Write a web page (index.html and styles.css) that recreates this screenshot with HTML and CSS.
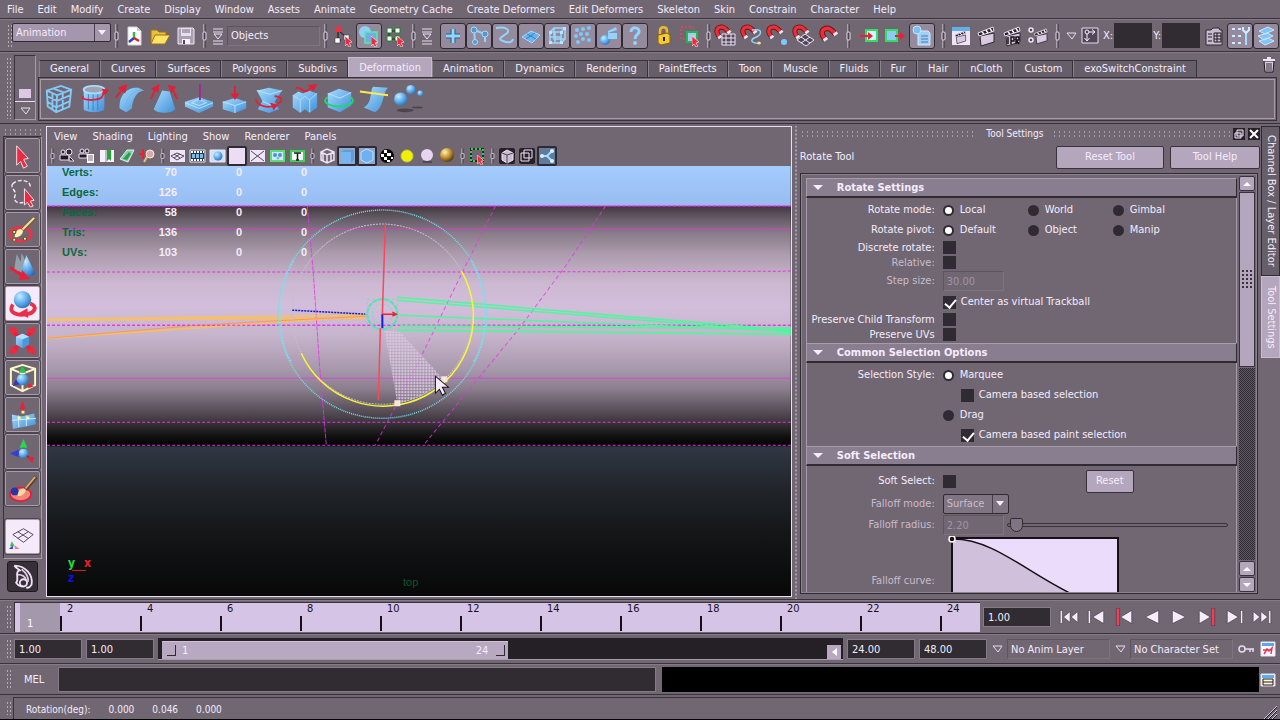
FILE: index.html
```html
<!DOCTYPE html>
<html lang="en">

<head>
    <meta charset="UTF-8">
    <meta name="viewport" content="width=device-width, initial-scale=1.0">
    <title>Animation</title>
    <link rel="stylesheet" href="styles.css">
</head>

<body>
    <!-- Shared icon shapes -->
    <svg class="defs" width="0" height="0">
        <defs>
            <linearGradient id="blue" x1="0" y1="0" x2="1" y2="1">
                <stop offset="0" stop-color="#a8dcff" />
                <stop offset="1" stop-color="#3f8fd8" />
            </linearGradient>
            <radialGradient id="ball" cx=".35" cy=".3" r=".8">
                <stop offset="0" stop-color="#c8ecff" />
                <stop offset=".5" stop-color="#62b0f0" />
                <stop offset="1" stop-color="#2868b0" />
            </radialGradient>
            <radialGradient id="gold" cx=".35" cy=".3" r=".8">
                <stop offset="0" stop-color="#fff4b0" />
                <stop offset=".5" stop-color="#c09030" />
                <stop offset="1" stop-color="#402808" />
            </radialGradient>
            <symbol id="sep" viewBox="0 0 10 26" preserveAspectRatio="none">
                <path d="M5 1v8M5 17v8" stroke="#e8daf0" />
                <path d="M6 1v8M6 17v8" stroke="#38323a" />
                <rect x="4" y="9" width="3" height="8" rx="1" fill="#48404a" stroke="#e8daf0" />
            </symbol>
            <symbol id="stack" viewBox="0 0 18 26">
                <path d="M4 6h10M4 9h10M4 18h10M4 21h10" stroke="#e8daf0" />
                <path d="M5 11h8l-4 5z" fill="none" stroke="#f0e4f8" />
            </symbol>
            <symbol id="down" viewBox="0 0 12 12">
                <path d="M2 3h9l-4 6z" fill="#706773" stroke="#e8daf0" />
            </symbol>
            <symbol id="magnet" viewBox="0 0 24 24">
                <path d="M7 16C1 9 3 4 9 3.500C13 3.500 15 7 18 10" fill="none" stroke="#701018" stroke-width="6" />
                <path d="M7 16C1 9 3 4 9 3.500C13 3.500 15 7 18 10" fill="none" stroke="#e83038" stroke-width="4" />
                <path d="M5 17l4-3M16 11l4-3" stroke="#f0e8f0" stroke-width="3" />
            </symbol>
            <symbol id="pick" viewBox="0 0 8 11">
                <path d="M0 0l7 6-3 1 2 3-2 1-2-3-2 2z" fill="#f02840" stroke="#ffd8e0" stroke-width=".7" />
            </symbol>
            <symbol id="clap" viewBox="0 0 24 24">
                <path d="M5 12l14-3v9l-13 4z" fill="#d8c8e0" stroke="#302832" />
                <path d="M3 9L18 3l1 4-15 5z" fill="#282028" stroke="#e8daf0" />
                <path d="M7 8l2 2M11 6l2 3M15 4.500l2 3" stroke="#fff" stroke-width="1.500" />
            </symbol>
            <symbol id="cube" viewBox="0 0 24 24">
                <path d="M3 6l9-4 9 4v11l-9 5-9-5z" fill="url(#blue)" />
                <path d="M3 6l9 4 9-4-9-4z" fill="#b4e0ff" />
                <path d="M12 10v12l9-5V6z" fill="#4a98dc" />
            </symbol>
        </defs>
    </svg>

    <nav class="menubar">
        <button>File</button>
        <button>Edit</button>
        <button>Modify</button>
        <button>Create</button>
        <button>Display</button>
        <button>Window</button>
        <button>Assets</button>
        <button>Animate</button>
        <button>Geometry Cache</button>
        <button>Create Deformers</button>
        <button>Edit Deformers</button>
        <button>Skeleton</button>
        <button>Skin</button>
        <button>Constrain</button>
        <button>Character</button>
        <button>Help</button>
    </nav>

    <div class="status-line">
        <div class="grip"></div>
        <div class="combo menu-set">
            <select aria-label="Menu set">
                <option>Animation</option>
            </select>
        </div>
        <svg class="sep"><use href="#sep" /></svg>
        <button class="icon" aria-label="New scene"><svg viewBox="0 0 24 24">
                <path d="M6 3h9l4 4v14H6z" fill="#fff" stroke="#d8d0d8" />
                <path d="M15 3v4h4" fill="#d0c8d0" />
                <path d="M12 14V8" stroke="#30c040" stroke-width="2.500" />
                <path d="M12 14l-5 4" stroke="#2040d0" stroke-width="2.500" />
                <path d="M12 14l5 3" stroke="#e02030" stroke-width="2.500" />
            </svg></button>
        <button class="icon" aria-label="Open scene"><svg viewBox="0 0 24 24">
                <path d="M3 19V6h6l2 2h7v3" fill="#e8c040" stroke="#a07010" />
                <path d="M3 20l4-9h15l-5 9z" fill="#ffe468" stroke="#a07010" />
            </svg></button>
        <button class="icon" aria-label="Save scene"><svg viewBox="0 0 24 24">
                <path d="M4 4h15l1 1v15H4z" fill="#a8a0b0" stroke="#f0e4f8" />
                <path d="M7 4h10v8H7z" fill="#e8e0f0" />
                <path d="M8 6h8M8 8h8" stroke="#706878" />
                <path d="M8 15h8v5H8z" fill="#f8f0ff" />
                <path d="M9 16h2v4H9z" fill="#504858" />
            </svg></button>
        <svg class="sep"><use href="#sep" /></svg>
        <svg class="stack"><use href="#stack" /></svg>
        <input class="flat objects" type="text" value="Objects" aria-label="Selection mask">
        <svg class="sep"><use href="#sep" /></svg>
        <button class="icon" aria-label="Select by hierarchy"><svg viewBox="0 0 24 24">
                <path d="M7 7v9h3M8 7l6 5" fill="none" stroke="#181018" />
                <path d="M4 3h6v5H4z" fill="#f03040" />
                <path d="M4 14h5v5H4zM13 11h5v5h-5z" fill="#fff" stroke="#302832" stroke-width=".5" />
                <use href="#pick" x="14" y="12" width="8" height="11" />
            </svg></button>
        <button class="icon on" aria-label="Select by object"><svg viewBox="0 0 24 24">
                <circle cx="8" cy="8" r="6" fill="#90d0f8" />
                <path d="M8 8h12v11H8z" fill="#70b0e0" stroke="#58e8a8" stroke-width="1.500" />
                <use href="#pick" x="14" y="12" width="8" height="11" />
            </svg></button>
        <button class="icon" aria-label="Select by component"><svg viewBox="0 0 24 24">
                <path d="M4 4h5v5H4zM12 4h5v5h-5zM4 12h5v5H4zM12 12h5v5h-5z" fill="#f4fff4" stroke="#208030" />
                <path d="M9 7h3M9 15h3M6 9v3" stroke="#183018" />
                <use href="#pick" x="14" y="12" width="8" height="11" />
            </svg></button>
        <svg class="sep"><use href="#sep" /></svg>
        <svg class="stack"><use href="#stack" /></svg>
        <div class="masks">
            <button class="icon on" aria-label="Handles"><svg viewBox="0 0 24 24">
                    <path d="M12 5v14M5 12h14" stroke="#2c5c80" stroke-width="5" />
                    <path d="M12 5v14M5 12h14" stroke="#90d4ff" stroke-width="3" />
                </svg></button>
            <button class="icon on" aria-label="Joints"><svg viewBox="0 0 24 24">
                    <path d="M7 6l1 12M7 6l11 4v8" fill="none" stroke="#90d4ff" stroke-width="2" />
                    <g fill="#5898c8" stroke="#a0dcff">
                        <circle cx="7" cy="6" r="3" />
                        <circle cx="18" cy="10" r="3" />
                        <circle cx="8" cy="18" r="2.500" />
                    </g>
                </svg></button>
            <button class="icon on" aria-label="Curves"><svg viewBox="0 0 24 24">
                    <path d="M3 4c9-2 16 2 10 6s-8 5-3 7 9 2 10-2" fill="none" stroke="#90d4ff" stroke-width="2" />
                </svg></button>
            <button class="icon on" aria-label="Surfaces"><svg viewBox="0 0 24 24">
                    <path d="M3 13l9-6 9 4-8 8z" fill="#68b4f0" stroke="#a8dcff" />
                    <path d="M8 10l9 5M7 15l9-6" stroke="#3880c0" />
                </svg></button>
            <button class="icon on" aria-label="Deformers"><svg viewBox="0 0 24 24">
                    <path d="M5 8h11v11H5zM9 4h11v11H9zM5 13h11M10 8v11M5 8l4-4M16 8l4-4M16 19l4-4" fill="none" stroke="#98d8ff" stroke-width="1.500" />
                    <path d="M4 7h3v3H4zM4 17h3v3H4zM15 7h3v3h-3zM15 17h3v3h-3zM18 3h3v3h-3z" fill="#b8e4ff" />
                </svg></button>
            <button class="icon on" aria-label="Dynamics"><svg viewBox="0 0 24 24">
                    <g fill="#80c8f8">
                        <circle cx="6" cy="6" r="2" /><circle cx="12" cy="5" r="2" /><circle cx="18" cy="4" r="2" />
                        <circle cx="5" cy="12" r="2" /><circle cx="10" cy="10" r="2" /><circle cx="16" cy="10" r="2" />
                        <circle cx="7" cy="18" r="2" /><circle cx="12" cy="15" r="2" /><circle cx="18" cy="16" r="2" />
                    </g>
                </svg></button>
            <button class="icon on" aria-label="Rendering"><svg viewBox="0 0 24 24">
                    <circle cx="8" cy="16" r="5" fill="url(#ball)" />
                    <path d="M11 9h9v6h-9zM11 7l8-4 1 3-9 3z" fill="#90d4ff" />
                </svg></button>
            <button class="icon on" aria-label="Miscellaneous"><svg viewBox="0 0 24 24">
                    <path d="M8 8c0-6 9-5 8 0-1 3-4 3-4 7" fill="none" stroke="#90d4ff" stroke-width="3" />
                    <circle cx="12" cy="19" r="2" fill="#90d4ff" />
                </svg></button>
        </div>
        <button class="icon" aria-label="Lock selection"><svg viewBox="0 0 24 24">
                <path d="M8 10V7c0-5 7-5 7 0v3" fill="none" stroke="#f0b828" stroke-width="2.500" />
                <path d="M6 11l9-2 3 2v8l-9 2-3-2z" fill="#f8c830" stroke="#806010" />
                <path d="M12 13v4" stroke="#302000" stroke-width="2" />
            </svg></button>
        <button class="icon" aria-label="Highlight selection"><svg viewBox="0 0 24 24">
                <path d="M3 3h12v12H3z" fill="none" stroke="#f04058" stroke-dasharray="2 2" stroke-width="1.500" />
                <path d="M9 8h10v10H9z" fill="#a8ccf0" stroke="#20b850" stroke-width="2" />
                <use href="#pick" x="14" y="12" width="8" height="11" />
            </svg></button>
        <svg class="sep"><use href="#sep" /></svg>
        <button class="icon" aria-label="Snap to grids"><svg viewBox="0 0 24 24">
                <path d="M8 10h13v11H8zM8 14h13M8 18h13M12 10v11M17 10v11" fill="#504858" stroke="#f0e4f8" />
                <use href="#magnet" width="20" height="20" />
            </svg></button>
        <button class="icon" aria-label="Snap to curves"><svg viewBox="0 0 24 24">
                <use href="#magnet" width="20" height="20" />
                <path d="M12 6c12-2 10 5 2 8-5 3-1 6 7 5" fill="none" stroke="#98d0f8" stroke-width="1.500" />
                <circle cx="19" cy="19" r="1.500" fill="#ffe860" />
            </svg></button>
        <button class="icon" aria-label="Snap to points"><svg viewBox="0 0 24 24">
                <use href="#magnet" width="20" height="20" />
                <circle cx="18" cy="18" r="3" fill="#80c8ff" />
            </svg></button>
        <button class="icon" aria-label="Snap to view planes"><svg viewBox="0 0 24 24">
                <path d="M5 16l8-6 9 6-8 6zM9 13l9 6M9 19l9-6" fill="#504858" stroke="#f0e4f8" />
                <use href="#magnet" width="20" height="20" />
            </svg></button>
        <button class="icon" aria-label="Make live"><svg viewBox="0 0 24 24"><use href="#magnet" x="1" y="1" width="22" height="22" /></svg></button>
        <svg class="sep"><use href="#sep" /></svg>
        <div class="masks">
            <button class="icon" aria-label="Inputs"><svg viewBox="0 0 24 24">
                    <path d="M8 6h11v11H8z" fill="#d8f0ff" stroke="#30e060" stroke-width="2" />
                    <path d="M2 11h8V8l5 4-5 4v-3H2z" fill="#e82038" />
                </svg></button>
            <button class="icon" aria-label="Outputs"><svg viewBox="0 0 24 24">
                    <path d="M2 6h11v11H2z" fill="#90c8f8" stroke="#30e060" stroke-width="2" />
                    <path d="M11 11h5V8l5 4-5 4v-3h-5z" fill="#e82038" />
                </svg></button>
            <button class="icon on" aria-label="Construction history"><svg viewBox="0 0 24 24">
                    <path d="M8 7h10l2 2v12H8z" fill="#a0d0f8" stroke="#d0ecff" />
                    <circle cx="7" cy="6" r="4" fill="#80c0f0" stroke="#c0e4ff" />
                    <path d="M11 12h7M11 15h7M11 18h7" stroke="#4878a8" />
                </svg></button>
        </div>
        <svg class="sep"><use href="#sep" /></svg>
        <button class="icon" aria-label="Render view"><svg viewBox="0 0 24 24">
                <path d="M3 3h18v18H3z" fill="#f0e4f8" />
                <path d="M3 3h18v4H3z" fill="#60b0f0" />
                <use href="#clap" x="4" y="5" width="16" height="16" />
            </svg></button>
        <button class="icon" aria-label="Render frame"><svg viewBox="0 0 24 24"><use href="#clap" width="24" height="24" /></svg></button>
        <button class="icon" aria-label="IPR render"><svg viewBox="0 0 24 24">
                <use href="#clap" width="24" height="24" />
                <path d="M7 13v7M10 20v-7h3v4h-3M15 20v-7h3v3h-3l3 4" fill="none" stroke="#181018" stroke-width="1.500" />
            </svg></button>
        <button class="icon" aria-label="Render settings"><svg viewBox="0 0 24 24">
                <use href="#clap" x="5" y="2" width="19" height="20" />
                <circle cx="4" cy="6" r="2" fill="#504858" stroke="#f0e4f8" stroke-width="1.500" />
                <circle cx="4" cy="16" r="2" fill="#504858" stroke="#f0e4f8" stroke-width="1.500" />
            </svg></button>
        <svg class="sep"><use href="#sep" /></svg>
        <div class="coords">
            <svg class="down"><use href="#down" /></svg>
            <button class="icon" aria-label="Input line mode"><svg viewBox="0 0 24 24">
                    <path d="M4 4h16v15H4z" fill="#504858" stroke="#e8daf0" />
                    <path d="M9 9v7M9 8h7M14 5.500l3 2.500-3 2.500M6.500 14l2.500 3 2.500-3" fill="none" stroke="#f8f0ff" />
                    <circle cx="9" cy="8" r="2" fill="#504858" stroke="#f8f0ff" />
                </svg></button>
            <label for="coord-x">X:</label>
            <input id="coord-x" class="dark" type="text">
            <label for="coord-y">Y:</label>
            <input id="coord-y" class="dark" type="text">
            <button class="icon" aria-label="Attribute editor"><svg viewBox="0 0 24 24">
                    <path d="M4 6h5l2-2h6l1 2h2v15H4z" fill="#c8bcd0" stroke="#302832" />
                    <path d="M6 10h4M6 13h4M6 17h4M12 9h7v9h-7zM12 12h7M12 15h7M15 9v9" fill="none" stroke="#201820" />
                </svg></button>
            <button class="icon on" aria-label="Tool settings"><svg viewBox="0 0 24 24">
                    <path d="M4 5h3M10 5h3M4 12h3M10 12h3M4 19h3M10 19h3" stroke="#d0ecff" stroke-width="2" />
                    <path d="M18 9v12" stroke="#a8dcff" stroke-width="2" />
                    <path d="M15 3v3l3 3 3-3V3" fill="none" stroke="#d0ecff" stroke-width="2" />
                </svg></button>
            <button class="icon on" aria-label="Channel box"><svg viewBox="0 0 24 24">
                    <path d="M5 7l9-4 6 3-9 4zM4 12l9-3 6 3-9 4zM5 17l9-3 6 3-9 4z" fill="#80c4f8" stroke="#c8e8ff" />
                </svg></button>
        </div>
    </div>

    <div class="shelf">
        <div class="grip"></div>
        <div class="shelf-side">
            <button class="swatch" aria-label="Shelf tabs"></button>
            <button class="side-arrow" aria-label="Shelf menu"><svg class="down"><use href="#down" /></svg></button>
        </div>
        <div class="shelf-main">
            <div class="tabs">
                <button>General</button>
                <button>Curves</button>
                <button>Surfaces</button>
                <button>Polygons</button>
                <button>Subdivs</button>
                <button class="current">Deformation</button>
                <button>Animation</button>
                <button>Dynamics</button>
                <button>Rendering</button>
                <button>PaintEffects</button>
                <button>Toon</button>
                <button>Muscle</button>
                <button>Fluids</button>
                <button>Fur</button>
                <button>Hair</button>
                <button>nCloth</button>
                <button>Custom</button>
                <button>exoSwitchConstraint</button>
                <svg class="trash" viewBox="0 0 16 18">
                    <path d="M3 5h10l-1 11H4z" fill="#d8ccdc" stroke="#201820" />
                    <path d="M2 4h12M6 2h4" stroke="#f0e4f8" stroke-width="2" />
                    <path d="M6 7v8M8 7v8M10 7v8" stroke="#302832" />
                </svg>
            </div>
            <div class="shelf-items">
                <button aria-label="Lattice"><svg viewBox="0 0 32 32">
                        <path d="M3 7l15-5 11 4-2 18-14 6L4 24zM3 7l11 5 15-6M14 12l-1 18M3 13l11 5 14-6M4 19l9 6 15-7M9 10v17M20 9v17M10 5l11 4" fill="none" stroke="#84c8f8" stroke-width="2" />
                    </svg></button>
                <button aria-label="Wrap"><svg viewBox="0 0 32 32">
                        <path d="M5 6v21c2 4 20 4 22 0V6z" fill="url(#blue)" />
                        <ellipse cx="16" cy="6" rx="11" ry="4" fill="#a0a4b0" stroke="#a8dcff" stroke-width="2" />
                        <path d="M10 11v16M15 11v17M20 11v17" stroke="#3c80c0" />
                        <path d="M28 8c-6 0 4 8-14 9-9 0-12-2-9-4" fill="none" stroke="#e02038" stroke-width="2" />
                        <path d="M24 5l8 1-4 6z" fill="#e02038" />
                    </svg></button>
                <button aria-label="Bend"><svg viewBox="0 0 32 32">
                        <path d="M6 26c-1-15 9-23 20-22l6 3c-8 1-12 9-13 19l-6 4z" fill="url(#blue)" />
                        <path d="M12 28c0-12 6-20 17-22" fill="none" stroke="#70b4ec" />
                        <path d="M2 15L9 5" stroke="#e02038" stroke-width="2" />
                        <path d="M4 4l10-4-2 10z" fill="#e02038" />
                    </svg></button>
                <button aria-label="Flare"><svg viewBox="0 0 32 32">
                        <path d="M14 7l8 1 6 19c-4 5-19 5-23 0z" fill="url(#blue)" />
                        <path d="M2 16L7 5M30 16L25 5" stroke="#e02038" stroke-width="2" />
                        <path d="M2 5l9-5-1 9zM20 1l9 2-5 7z" fill="#e02038" />
                    </svg></button>
                <button aria-label="Sine"><svg viewBox="0 0 32 32">
                        <path d="M1 19l15-5 15 5v5l-15 7-15-7z" fill="url(#blue)" />
                        <path d="M1 20l15 6 15-6M8 20l8 3 8-3-8-4z" fill="none" stroke="#b8e4ff" />
                        <path d="M17 0v17" stroke="#a02898" stroke-width="2" />
                    </svg></button>
                <button aria-label="Squash"><svg viewBox="0 0 32 32">
                        <path d="M4 19l13-4 12 4v7l-12 5-13-4z" fill="url(#blue)" />
                        <path d="M4 19l13 4 12-4M17 23v8" fill="none" stroke="#b8e4ff" />
                        <path d="M17 2v10" stroke="#e02038" stroke-width="2" />
                        <path d="M12 10h10l-5 7z" fill="#e02038" />
                    </svg></button>
                <button aria-label="Twist"><svg viewBox="0 0 32 32">
                        <path d="M3 7l13-3 14 3-8 12 5 8-11 4-12-4 5-9z" fill="url(#blue)" />
                        <path d="M3 7l14 4 13-4M9 18l15 8" fill="none" stroke="#b8e4ff" />
                        <path d="M2 16c1 8 14 10 19 7M22 13c8 0 10 6 3 8" fill="none" stroke="#e02038" stroke-width="2" />
                        <path d="M17 20l9 2-5 6z" fill="#e02038" />
                    </svg></button>
                <button aria-label="Wave"><svg viewBox="0 0 32 32">
                        <path d="M4 12l6-4 5 2 6-3 9 3v15l-8 6-5-4-5 4-8-6z" fill="url(#blue)" />
                        <path d="M4 12l8 5 5-4 5 4 8-7M12 17v13M22 17v13" fill="none" stroke="#a8dcff" />
                        <path d="M7 5c5-5 7 6 13 2l5-4" fill="none" stroke="#e02038" stroke-width="2" />
                        <path d="M20 1l10-1-4 8z" fill="#e02038" />
                    </svg></button>
                <button aria-label="Sculpt"><svg viewBox="0 0 32 32">
                        <path d="M4 10l12-5 13 4v14l-12 7-13-5z" fill="url(#blue)" />
                        <path d="M4 10l13 5 12-6" fill="none" stroke="#b8e4ff" />
                        <path d="M4 14c-8 5 2 10 12 10s20-5 12-10" fill="none" stroke="#20d870" stroke-width="2" />
                    </svg></button>
                <button aria-label="Wire"><svg viewBox="0 0 32 32">
                        <path d="M15 3l16 1c-6 5-4 21-14 26L5 25c10-5 6-17 10-22z" fill="url(#blue)" />
                        <path d="M1 8l30 4" stroke="#ffe850" stroke-width="2" />
                    </svg></button>
                <button aria-label="Soft modification"><svg viewBox="0 0 32 32">
                        <ellipse cx="12" cy="28" rx="9" ry="2" fill="#4c444e" />
                        <ellipse cx="25" cy="25" rx="6" ry="1" fill="#4c444e" />
                        <circle cx="7" cy="16" r="7" fill="url(#ball)" />
                        <circle cx="18" cy="6" r="5" fill="url(#ball)" />
                        <circle cx="28" cy="10" r="3" fill="url(#ball)" />
                    </svg></button>
            </div>
        </div>
    </div>

    <main class="workspace">
        <div class="toolbox">
            <div class="grip-h"></div>
            <div class="tools">
                <button aria-label="Select tool"><svg viewBox="0 0 32 32"><path d="M10 6l12 13-5 1 4 7-4 2-3-7-4 4z" fill="#f02840" stroke="#ffe0e8" /></svg></button>
                <button aria-label="Lasso tool"><svg viewBox="0 0 32 32">
                        <path d="M6 7c4-5 18-5 18 3M6 7c-4 4 5 7 2 13-1 5 2 8 10 6" fill="none" stroke="#f0e4f8" stroke-width="1.500" stroke-dasharray="4 2" />
                        <path d="M18 12l10 12-4 1 3 5-3 1-3-5-3 3z" fill="#f02840" stroke="#ffe0e8" />
                    </svg></button>
                <button aria-label="Paint selection tool"><svg viewBox="0 0 32 32">
                        <ellipse cx="14" cy="21" rx="11" ry="7" fill="none" stroke="#f03048" stroke-width="3" />
                        <path d="M8 24c0-6 4-10 9-8-1 6-4 8-9 8z" fill="#fff0b0" />
                        <path d="M16 17L29 4" stroke="#806030" stroke-width="4" />
                        <path d="M16 16L28 4" stroke="#f8e0a0" stroke-width="2" />
                        <path d="M6 17h3v3H6zM6 25h3v3H6zM17 24h3v3h-3z" fill="#fff0b0" stroke="#605020" />
                    </svg></button>
                <button aria-label="Move tool"><svg viewBox="0 0 32 32">
                        <path d="M10 3l8 16-11 3zM15 2l8 16-10 4z" fill="#b8dce8" opacity=".5" />
                        <path d="M20 4l9 19c-2 4-12 4-15 0z" fill="url(#ball)" />
                        <path d="M3 17l14 9" stroke="#e82038" stroke-width="3" />
                        <path d="M16 20l8 9-12 1z" fill="#e82038" />
                    </svg></button>
                <button class="current" aria-label="Rotate tool"><svg viewBox="0 0 32 32">
                        <path d="M6 17c-6 9 6 12 14 10M24 16c8 3 5 10-4 11" fill="none" stroke="#e83048" stroke-width="4" />
                        <circle cx="16" cy="12" r="9" fill="url(#ball)" />
                        <path d="M21 21l-9 5 10 5z" fill="#e83048" />
                    </svg></button>
                <button aria-label="Scale tool"><svg viewBox="0 0 32 32">
                        <path d="M4 4l24 25M28 4L4 29" stroke="#e82038" stroke-width="4" />
                        <path d="M2 2l10 2-7 7zM30 2l-10 2 7 7zM2 30l10-2-7-7zM30 30l-10-2 7-7z" fill="#f02840" />
                        <use href="#cube" x="7" y="7" width="18" height="19" />
                    </svg></button>
                <button aria-label="Universal manipulator"><svg viewBox="0 0 32 32">
                        <path d="M4 7l12-4 13 4v17l-13 6-12-6zM4 7l12 5 13-5M16 12v18" fill="none" stroke="#fff8c8" stroke-width="2" />
                        <circle cx="16" cy="18" r="6" fill="url(#ball)" />
                        <path d="M16 4l4 7h-8z" fill="#20c848" />
                        <path d="M6 25l7-2-4-5z" fill="#3038c8" />
                        <path d="M21 22l7 3-6 2z" fill="#e82038" />
                    </svg></button>
                <button aria-label="Soft modification tool"><svg viewBox="0 0 32 32">
                        <path d="M5 16l10 2 13-3 2 11-9 2-15 3z" fill="url(#blue)" />
                        <path d="M5 22l25-2M12 17v12M20 17v11" stroke="#d0ecff" />
                        <path d="M16 7v8" stroke="#e82038" stroke-width="2" />
                        <path d="M16 2l3 8h-6z" fill="#e82038" />
                        <path d="M15 12h3v3h-3zM11 18h3v3h-3zM20 18h3v3h-3z" fill="#ffff90" />
                    </svg></button>
                <button aria-label="Show manipulator"><svg viewBox="0 0 32 32">
                        <path d="M17 18V9M17 18H8M17 18l8 6" stroke="#302832" stroke-width="2" />
                        <circle cx="17" cy="18" r="5" fill="url(#ball)" />
                        <path d="M17 3l4 9h-8z" fill="#28d850" />
                        <path d="M3 18l9-4v8z" fill="#3040d8" />
                        <path d="M20 21l8 1-2 6z" fill="#e82038" />
                    </svg></button>
                <button aria-label="Last tool"><svg viewBox="0 0 32 32">
                        <ellipse cx="14" cy="22" rx="11" ry="7" fill="#f08878" stroke="#e02040" stroke-width="2" />
                        <ellipse cx="8" cy="19" rx="4" ry="4" fill="#2038a8" />
                        <path d="M11 24c0-6 4-9 9-8-1 5-4 8-9 8z" fill="#f8d8a8" />
                        <path d="M19 17L30 4" stroke="#604028" stroke-width="4" />
                        <path d="M19 16L29 4" stroke="#d8a878" stroke-width="2" />
                    </svg></button>
                <button class="current layout" aria-label="Single view"><svg viewBox="0 0 32 32">
                        <path d="M6 14l11-6 10 6-10 8zM11 11l11 7M11 18l11-7" fill="none" stroke="#504858" />
                        <path d="M5 21l3 5H3z" fill="#30c850" />
                        <path d="M2 29l4-4v4z" fill="#3040d8" />
                        <path d="M8 25l5 4H8z" fill="#f08090" />
                    </svg></button>
            </div>
            <button class="logo" aria-label="Home"><svg viewBox="0 0 32 32">
                    <path d="M7 4c12 0 21 10 19 21-2 3-4 4-6 3M7 4c2 3 5 4 7 6M12 9c-5 4 1 9-3 14 2 3 4 4 7 4" fill="none" stroke="#f0e4f8" stroke-width="2" />
                    <path d="M15 8c5 4 8 9 7 14M11 14c4 0 8 2 9 6" fill="none" stroke="#d8cce0" stroke-width="2" />
                    <circle cx="17" cy="23" r="4" fill="none" stroke="#f0e4f8" stroke-width="2" />
                </svg></button>
        </div>

        <section class="viewport">
            <nav class="panel-menu">
                <button>View</button>
                <button>Shading</button>
                <button>Lighting</button>
                <button>Show</button>
                <button>Renderer</button>
                <button>Panels</button>
            </nav>
            <div class="panel-bar">
                <svg class="sep"><use href="#sep" /></svg>
                <button aria-label="Select camera"><svg viewBox="0 0 18 18"><path d="M2 8h9v5H2zM11 9l5 5h-5z" fill="#201820" stroke="#e8daf0" /><circle cx="5" cy="5" r="2" fill="#302832" stroke="#f0e4f8" /><circle cx="11" cy="5" r="3" fill="#302832" stroke="#f0e4f8" /></svg></button>
                <button aria-label="Camera attributes"><svg viewBox="0 0 18 18"><path d="M1 7h8v4H1z" fill="#201820" stroke="#e8daf0" /><circle cx="4" cy="4" r="2" fill="#302832" stroke="#f0e4f8" /><circle cx="9" cy="4" r="2" fill="#302832" stroke="#f0e4f8" /><path d="M9 7h7v9H9z" fill="#fff" /><path d="M10 9h5M10 11h5M10 13h5" stroke="#706878" /></svg></button>
                <button aria-label="Bookmarks"><svg viewBox="0 0 18 18"><path d="M2 3h14v12H2z" fill="#f8f0ff" /><path d="M8 3v12" stroke="#888" /><path d="M9 3h4v11l-2-2-2 2z" fill="#20a830" /></svg></button>
                <button aria-label="Image plane"><svg viewBox="0 0 18 18"><path d="M2 12l7-9h7l-6 12z" fill="#88c8c0" stroke="#d8f8d8" /><path d="M5 12l6-7 2 2-4 6z" fill="#30a040" /></svg></button>
                <button aria-label="Pan and zoom"><svg viewBox="0 0 18 18"><path d="M5 2v10M1 7h9" stroke="#e82038" stroke-width="2" /><circle cx="12" cy="7" r="4" fill="#d8a8b0" stroke="#fff0d0" /><path d="M9 10l-3 5" stroke="#e8c080" stroke-width="2" /></svg></button>
                <svg class="sep"><use href="#sep" /></svg>
                <button aria-label="Grid"><svg viewBox="0 0 18 18"><path d="M2 3h15v12H2z" fill="#f0e4f8" /><path d="M3 9l6-3 7 3-7 4zM6 7l6 4M6 11l6-4" fill="none" stroke="#504858" /></svg></button>
                <button aria-label="Film gate"><svg viewBox="0 0 18 18"><path d="M2 3h15v12H2z" fill="#203850" stroke="#f0e4f8" /><path d="M3 5h13M3 13h13" stroke="#fff" stroke-width="2" stroke-dasharray="2 1" /><path d="M4 7h3v4H4zM8 7h3v4H8zM12 7h3v4h-3z" fill="#80b8e8" /></svg></button>
                <button aria-label="Resolution gate"><svg viewBox="0 0 18 18"><path d="M2 3h15v12H2z" fill="#d0e0f8" stroke="#f0e4f8" /><circle cx="10" cy="9" r="4.500" fill="url(#ball)" /></svg></button>
                <button class="on" aria-label="Gate mask"><svg viewBox="0 0 18 18"><path d="M1 1h16v16H1z" fill="#ecdcf4" /></svg></button>
                <button aria-label="Field chart"><svg viewBox="0 0 18 18"><path d="M2 3h15v12H2z" fill="#f0e4f8" /><path d="M3 4l13 10M16 4L3 14" stroke="#504858" /></svg></button>
                <button aria-label="Safe action"><svg viewBox="0 0 18 18"><path d="M3 4h13v10H3z" fill="#d0e8f8" stroke="#58e070" stroke-width="2" /><circle cx="7" cy="8" r="2" fill="#5090d0" /><circle cx="12" cy="8" r="2" fill="#5090d0" /><circle cx="10" cy="11" r="1.500" fill="#80b8e8" /></svg></button>
                <button aria-label="Safe title"><svg viewBox="0 0 18 18"><path d="M3 4h13v10H3z" fill="#f8f8ff" stroke="#40d058" stroke-width="2" /><path d="M6 6h7M9.500 6v7M8 13h3" stroke="#201820" stroke-width="1.500" /></svg></button>
                <svg class="sep"><use href="#sep" /></svg>
                <button aria-label="Wireframe"><svg viewBox="0 0 18 18"><path d="M3 5l6-3 7 3v8l-7 3-6-3zM3 5l6 3 7-3M9 8v8M5 6v8M13 6v8" fill="none" stroke="#f0e4f8" stroke-width="1.500" /></svg></button>
                <button class="on" aria-label="Smooth shade"><svg viewBox="0 0 18 18"><path d="M1 1h16v16H1z" fill="#8ca8cc" /><path d="M3 5l3-2h10v10l-3 3H3z" fill="#609cdc" /><path d="M3 5h10v11H3z" fill="#78b4f0" /></svg></button>
                <button class="on" aria-label="Wireframe on shaded"><svg viewBox="0 0 18 18"><path d="M1 1h16v16H1z" fill="#8ca8cc" /><path d="M3 5l6-3 6 3v8l-6 3-6-3z" fill="#70b0f0" stroke="#b8e0ff" /></svg></button>
                <button aria-label="Textured"><svg viewBox="0 0 18 18"><circle cx="9" cy="9" r="7" fill="#080808" /><path d="M6 3h3v3H6zM9 6h4v3H9zM3 7h3v3H3zM6 10h3v3H6zM13 10h2v2h-2zM9 13h3v2H9z" fill="#fff" /></svg></button>
                <button aria-label="Use all lights"><svg viewBox="0 0 18 18"><circle cx="9" cy="9" r="6" fill="#f0f000" stroke="#c8c840" /></svg></button>
                <button aria-label="Shadows"><svg viewBox="0 0 18 18"><path d="M5 15h9" stroke="#504858" stroke-width="2" /><circle cx="9" cy="8" r="6" fill="#e8d4f0" /></svg></button>
                <button aria-label="High quality"><svg viewBox="0 0 18 18"><circle cx="9" cy="8" r="7" fill="url(#gold)" /></svg></button>
                <svg class="sep"><use href="#sep" /></svg>
                <button aria-label="Isolate select"><svg viewBox="0 0 18 18"><path d="M3 2h12v12H3z" fill="none" stroke="#103818" stroke-width="2" /><path d="M3 2h12v12H3z" fill="none" stroke="#58e880" stroke-width="1.500" stroke-dasharray="2 2" /><use href="#pick" x="9" y="8" width="8" height="10" /></svg></button>
                <svg class="sep"><use href="#sep" /></svg>
                <button aria-label="X-ray"><svg viewBox="0 0 18 18"><rect x="1" y="1" width="16" height="16" rx="2" fill="#282028" /><path d="M4 6l5-3 6 3v7l-6 3-5-3z" fill="#c8bcd0" stroke="#f0e4f8" /><path d="M4 6l5 2 6-2M9 8v8" fill="none" stroke="#504858" /></svg></button>
                <button aria-label="X-ray active"><svg viewBox="0 0 18 18"><rect x="1" y="1" width="16" height="16" rx="2" fill="#282028" /><path d="M3 6h8v8H3zM6 3h8v8H6z" fill="none" stroke="#f0e4f8" /></svg></button>
                <button class="on" aria-label="X-ray joints"><svg viewBox="0 0 18 18"><path d="M1 1h16v16H1z" fill="#607c9c" /><path d="M4 9h5l5-5M9 9l5 5" fill="none" stroke="#a8dcff" stroke-width="2" /><g fill="#d8f0ff"><circle cx="4" cy="9" r="2" /><circle cx="14" cy="4" r="2" /><circle cx="14" cy="14" r="2" /></g></svg></button>
            </div>
            <div class="scene">
                <svg viewBox="0 0 743 430" preserveAspectRatio="xMinYMin slice">
                    <defs>
                        <linearGradient id="sky" x1="0" y1="0" x2="0" y2="1">
                            <stop offset="0" stop-color="#a4ccff" />
                            <stop offset="1" stop-color="#98bcf0" />
                        </linearGradient>
                        <linearGradient id="tube" x1="0" y1="0" x2="0" y2="1">
                            <stop offset="0" stop-color="#40383e" />
                            <stop offset=".05" stop-color="#645a64" />
                            <stop offset=".11" stop-color="#887a88" />
                            <stop offset=".2" stop-color="#ac9cae" />
                            <stop offset=".32" stop-color="#ccb8d0" />
                            <stop offset=".42" stop-color="#d2bedb" />
                            <stop offset=".54" stop-color="#c6b4cc" />
                            <stop offset=".68" stop-color="#a898ac" />
                            <stop offset=".76" stop-color="#8c7e8e" />
                            <stop offset=".88" stop-color="#484048" />
                            <stop offset=".96" stop-color="#101010" />
                            <stop offset="1" stop-color="#000" />
                        </linearGradient>
                        <linearGradient id="floor" x1="0" y1="0" x2="0" y2="1">
                            <stop offset="0" stop-color="#303844" />
                            <stop offset=".3" stop-color="#202429" />
                            <stop offset=".6" stop-color="#131517" />
                            <stop offset="1" stop-color="#080808" />
                        </linearGradient>
                        <pattern id="dots" width="3" height="3" patternUnits="userSpaceOnUse">
                            <path d="M0 0h2v2H0z" fill="#d8c8e0" />
                        </pattern>
                    </defs>
                    <rect width="743" height="40" fill="url(#sky)" />
                    <rect y="40" width="743" height="240" fill="url(#tube)" />
                    <rect y="280" width="743" height="150" fill="url(#floor)" />

                    <!-- mesh wireframe -->
                    <g fill="none" stroke="#e832e8">
                        <path d="M0 40h743M0 63h743M0 212h743" opacity=".7" />
                        <path d="M0 40h743M0 106h420l323-1M0 159h743M0 256h743M0 279h743" stroke-dasharray="3 2" />
                        <path d="M448 40l-33 66-42 86-45 87M558 40l-40 60-46 62-96 117" stroke-dasharray="4 3" opacity=".8" />
                        <path d="M260 40l6 66 6 90 7 83" stroke-dasharray="5 1" opacity=".8" />
                    </g>

                    <!-- skeleton -->
                    <g fill="none">
                        <path d="M0 153l318-4M0 172l318-22M0 154l318-2" stroke="#ffc050" stroke-width="2" opacity=".75" />
                        <path d="M0 172l150-13 168-9" stroke="#ff9850" />
                        <path d="M0 159h743" stroke="#e832e8" stroke-dasharray="3 2" />
                        <path d="M350 131l393 33M350 134l393 32M352 149l391 16" stroke="#4cf89c" stroke-width="1.500" />
                        <path d="M350 164l393 4M352 160l391 2" stroke="#5cf0a0" stroke-width="2" />
                        <circle cx="335" cy="148" r="15" stroke="#48e8b0" stroke-width="2" stroke-dasharray="5 1" />
                        <path d="M320 133h30v30h-30z" stroke="#60e8b8" stroke-dasharray="2 3" />
                        <circle cx="335" cy="148" r="10" stroke="#70e0c0" stroke-dasharray="2 2" />
                    </g>

                    <!-- rotate manipulator -->
                    <path d="M337 164l13 73c18-3 34-11 46-24l-43-47z" fill="url(#dots)" />
                    <g fill="none">
                        <circle cx="335" cy="148" r="104" stroke="#70e0e8" stroke-width="1.500" stroke-dasharray="1 1" />
                        <path d="M246 95c-17 30-18 75-2 101M424 95c17 30 18 75 2 101" stroke="#80e0f0" stroke-width="2" stroke-dasharray="2 1" opacity=".7" />
                        <circle cx="335" cy="148" r="90" stroke="#c8bcd0" stroke-dasharray="2 1" />
                        <path d="M254 187A90 90 0 1 0 414 105" stroke="#f8f830" stroke-width="1.500" />
                        <path d="M338 58l-3 90M333 162l-2 72" stroke="#f84858" stroke-width="1.500" />
                        <path d="M245 144l73 4" stroke="#1818c0" stroke-width="1.500" stroke-dasharray="2 1" />
                        <path d="M335 148v14" stroke="#1020e0" stroke-width="2" />
                        <path d="M335 148h14M345 146l4 2-4 2" stroke="#f02030" stroke-width="1.500" />
                    </g>
                    <path d="M347 234h6v6h-6zM394 210h6v6h-6z" fill="#f4e8d8" />
                    <path d="M388 210v17l4-4 3 6 3-2-3-6h6z" fill="#f4ecf8" stroke="#181018" />

                    <!-- view axis -->
                    <path d="M25 404h14" stroke="#e02020" />
                    <g class="axis">
                        <text x="21" y="401" fill="#20e040">y</text>
                        <text x="37" y="401" fill="#f02020">x</text>
                        <text x="21" y="416" fill="#1010e0">z</text>
                    </g>
                </svg>
                <table class="hud">
                    <tr><th>Verts:</th><td>70</td><td>0</td><td>0</td></tr>
                    <tr><th>Edges:</th><td>126</td><td>0</td><td>0</td></tr>
                    <tr><th>Faces:</th><td>58</td><td>0</td><td>0</td></tr>
                    <tr><th>Tris:</th><td>136</td><td>0</td><td>0</td></tr>
                    <tr><th>UVs:</th><td>103</td><td>0</td><td>0</td></tr>
                </table>
                <span class="camera-name">top</span>
            </div>
        </section>

        <div class="splitter"></div>

        <section class="tool-settings">
            <header class="dock-title">
                <span class="dots"></span>
                <h2>Tool Settings</h2>
                <span class="dots"></span>
                <button aria-label="Float"><svg viewBox="0 0 12 12"><path d="M4 2h6v6H4zM2 5h6v5H2z" fill="#504858" stroke="#f0e4f8" /></svg></button>
                <button aria-label="Close"><svg viewBox="0 0 12 12"><path d="M2 2l8 8M10 2l-8 8" stroke="#fff" stroke-width="2" /></svg></button>
            </header>
            <div class="tool-head">
                <span>Rotate Tool</span>
                <button class="push reset-tool">Reset Tool</button>
                <button class="push tool-help">Tool Help</button>
            </div>
            <div class="settings-frame">
                <div class="settings">
                    <h3>Rotate Settings</h3>
                    <div class="group">
                        <div class="row">
                            <span class="name">Rotate mode:</span>
                            <label class="opt"><input type="radio" name="mode" checked>Local</label>
                            <label class="opt"><input type="radio" name="mode">World</label>
                            <label class="opt"><input type="radio" name="mode">Gimbal</label>
                        </div>
                        <div class="row">
                            <span class="name">Rotate pivot:</span>
                            <label class="opt"><input type="radio" name="pivot" checked>Default</label>
                            <label class="opt"><input type="radio" name="pivot">Object</label>
                            <label class="opt"><input type="radio" name="pivot">Manip</label>
                        </div>
                        <div class="row tight">
                            <label class="name" for="discrete">Discrete rotate:</label>
                            <input type="checkbox" id="discrete">
                        </div>
                        <div class="row tight dim">
                            <label class="name" for="relative">Relative:</label>
                            <input type="checkbox" id="relative" disabled>
                        </div>
                        <div class="row tall dim">
                            <label class="name" for="step">Step size:</label>
                            <input type="text" class="flat number" id="step" value="30.00" disabled>
                        </div>
                        <div class="row">
                            <span class="name"></span>
                            <label class="opt"><input type="checkbox" checked>Center as virtual Trackball</label>
                        </div>
                        <div class="row tight">
                            <label class="name" for="child">Preserve Child Transform</label>
                            <input type="checkbox" id="child">
                        </div>
                        <div class="row tight">
                            <label class="name" for="uvs">Preserve UVs</label>
                            <input type="checkbox" id="uvs">
                        </div>
                    </div>

                    <h3>Common Selection Options</h3>
                    <div class="group">
                        <div class="row">
                            <span class="name">Selection Style:</span>
                            <label class="opt"><input type="radio" name="style" checked>Marquee</label>
                        </div>
                        <div class="row">
                            <span class="name"></span>
                            <label class="opt nested"><input type="checkbox">Camera based selection</label>
                        </div>
                        <div class="row">
                            <span class="name"></span>
                            <label class="opt"><input type="radio" name="style">Drag</label>
                        </div>
                        <div class="row">
                            <span class="name"></span>
                            <label class="opt nested"><input type="checkbox" checked>Camera based paint selection</label>
                        </div>
                    </div>

                    <h3>Soft Selection</h3>
                    <div class="group">
                        <div class="row taller">
                            <label class="name" for="soft">Soft Select:</label>
                            <input type="checkbox" id="soft">
                            <button class="push reset">Reset</button>
                        </div>
                        <div class="row dim">
                            <label class="name" for="falloff">Falloff mode:</label>
                            <div class="combo falloff">
                                <select id="falloff">
                                    <option>Surface</option>
                                </select>
                            </div>
                        </div>
                        <div class="row tall dim">
                            <label class="name" for="radius">Falloff radius:</label>
                            <input type="text" class="flat number" id="radius" value="2.20" disabled>
                            <input type="range" aria-label="Falloff radius" min="0" max="100" value="1">
                        </div>
                        <div class="row curve-row dim">
                            <span class="name">Falloff curve:</span>
                            <svg class="curve" viewBox="0 0 176 90">
                                <path d="M9 2h166v88H9z" fill="#ecdcfc" stroke="#181018" stroke-width="2" />
                                <path d="M10 3c42 0 76 36 125 58l40 20v9H10z" fill="#d0c0dc" />
                                <path d="M10 3c42 0 76 36 125 58l40 20" fill="none" stroke="#181018" stroke-width="1.500" />
                                <circle cx="9" cy="3" r="3" fill="#181018" stroke="#fff" stroke-width="1.500" />
                            </svg>
                        </div>
                    </div>
                </div>
                <div class="scrollbar">
                    <button class="up" aria-label="Scroll up"></button>
                    <div class="thumb"></div>
                    <div class="track"></div>
                    <button class="up" aria-label="Page up"></button>
                    <button class="dn" aria-label="Scroll down"></button>
                </div>
            </div>
        </section>

        <div class="side-tabs">
            <button>Channel Box / Layer Editor</button>
            <button class="current">Tool Settings</button>
        </div>
    </main>

    <div class="time-row">
        <div class="grip"></div>
        <ol class="timeline">
            <li class="now">1</li>
            <li>2</li>
            <li>4</li>
            <li>6</li>
            <li>8</li>
            <li>10</li>
            <li>12</li>
            <li>14</li>
            <li>16</li>
            <li>18</li>
            <li>20</li>
            <li>22</li>
            <li class="last">24</li>
        </ol>
        <input class="dark" type="text" value="1.00" aria-label="Current time">
        <div class="playback">
            <button aria-label="Go to start"><svg viewBox="0 0 20 16"><path d="M2 2h2v12H2zM11 3v10L5 8zM18 3v10l-6-5z" /></svg></button>
            <button aria-label="Step back frame"><svg viewBox="0 0 20 16"><path d="M3 2h2v12H3zM17 2v12L7 8z" /></svg></button>
            <button aria-label="Step back key"><svg viewBox="0 0 20 16"><path d="M3 0h3v16H3z" fill="#f04058" /><path d="M17 2v12L7 8z" /></svg></button>
            <button aria-label="Play backwards"><svg viewBox="0 0 20 16"><path d="M16 2v12L4 8z" /></svg></button>
            <button aria-label="Play forwards"><svg viewBox="0 0 20 16"><path d="M4 2v12l12-6z" /></svg></button>
            <button aria-label="Step forward key"><svg viewBox="0 0 20 16"><path d="M14 0h3v16h-3z" fill="#f04058" /><path d="M3 2v12l10-6z" /></svg></button>
            <button aria-label="Step forward frame"><svg viewBox="0 0 20 16"><path d="M15 2h2v12h-2zM3 2v12l10-6z" /></svg></button>
            <button aria-label="Go to end"><svg viewBox="0 0 20 16"><path d="M16 2h2v12h-2zM9 3v10l6-5zM2 3v10l6-5z" /></svg></button>
        </div>
    </div>

    <div class="range-row">
        <div class="grip"></div>
        <input class="dark" type="text" value="1.00" aria-label="Animation start">
        <input class="dark" type="text" value="1.00" aria-label="Playback start">
        <div class="range">
            <div class="range-bar">
                <i class="stop"></i>
                <span>1</span>
                <span class="end">24</span>
                <i class="stop"></i>
            </div>
            <button class="range-more" aria-label="Scroll range"></button>
        </div>
        <input class="dark" type="text" value="24.00" aria-label="Playback end">
        <input class="dark" type="text" value="48.00" aria-label="Animation end">
        <svg class="down"><use href="#down" /></svg>
        <input class="flat layer" type="text" value="No Anim Layer" aria-label="Animation layer">
        <svg class="down"><use href="#down" /></svg>
        <input class="flat layer" type="text" value="No Character Set" aria-label="Character set">
        <button class="small" aria-label="Auto keyframe"><svg viewBox="0 0 18 16"><circle cx="5" cy="8" r="3" fill="none" stroke="#e8daf0" stroke-width="1.500" /><path d="M8 8h9M13 8v3M16 8v3" stroke="#e8daf0" stroke-width="1.500" /></svg></button>
        <button class="small" aria-label="Animation preferences"><svg viewBox="0 0 18 16"><path d="M2 1h14v14H2z" fill="#fff" stroke="#e8daf0" /><path d="M3 2h12v3H3z" fill="#58a8f0" /><path d="M5 13l3-5 2 2 3-3-1 6M4 9h9" fill="none" stroke="#f03050" stroke-width="1.500" /></svg></button>
    </div>

    <div class="command-row">
        <div class="grip"></div>
        <label for="mel">MEL</label>
        <input id="mel" class="dark" type="text">
        <output class="result"></output>
        <button class="small" aria-label="Script editor"><svg viewBox="0 0 18 16"><path d="M2 2h14v12H2z" fill="#fff8d8" stroke="#e8daf0" /><path d="M3 3h12v3H3z" fill="#58b0f8" /><path d="M4 7h10v6H4zM4 10h10" fill="none" stroke="#201820" /></svg></button>
    </div>

    <footer class="help-line">
        <div class="grip"></div>
        <div class="help-text">
            <span>Rotation(deg):</span>
            <span>0.000</span>
            <span>0.046</span>
            <span>0.000</span>
            <svg class="resize" viewBox="0 0 14 14"><path d="M1 14L14 1M5 14l9-9M9 14l5-5" stroke="#d8cce0" /><path d="M2 14L14 2M6 14l8-8M10 14l4-4" stroke="#201820" /></svg>
        </div>
    </footer>
</body>

</html>
```

FILE: styles.css
```css
* {
    box-sizing: border-box;
}

body {
    display: flex;
    flex-direction: column;
    height: 100vh;
    margin: 0;
    overflow: hidden;
    background-color: #706773;
    color: #f6ecfc;
    font-family: "DejaVu Sans Condensed", "DejaVu Sans", sans-serif;
    font-size: 11px;
    line-height: 14px;
    border-bottom: 1px solid #000;
}

button,
input,
select {
    margin: 0;
    padding: 0;
    border: 0;
    background: none;
    color: inherit;
    font: inherit;
}

svg {
    display: block;
}

.defs {
    position: absolute;
}

.grip {
    flex: none;
    align-self: stretch;
    width: 6px;
    margin: 4px 2px 4px 6px;
    background-image: radial-gradient(circle, #b8acbc 1px, transparent 1px);
    background-size: 3px 4px;
}

/* Menu bar */
.menubar {
    display: flex;
    flex: none;
    align-items: center;
    gap: 14px;
    height: 19px;
    padding: 1px 0 0 7px;
    border-bottom: 1px solid #38323a;
}

/* Status line */
.status-line {
    display: flex;
    flex: none;
    align-items: center;
    height: 33px;
    border-top: 1px solid #847a88;
    border-bottom: 1px solid #38323a;
}

.status-line .grip {
    width: 5px;
    margin: 4px 0 4px 7px;
}

.combo {
    position: relative;
    border: 1px solid #302a32;
    border-radius: 2px;
    background-color: #a496ac;
}

.combo select {
    width: 100%;
    height: 100%;
    padding-left: 3px;
    appearance: none;
}

.combo::before {
    content: "";
    position: absolute;
    top: 0;
    bottom: 0;
    right: 15px;
    border-left: 1px solid #48404c;
}

.combo::after {
    content: "";
    position: absolute;
    top: 6px;
    right: 4px;
    border: 4px solid transparent;
    border-top: 5px solid #f6ecfc;
    border-bottom: 0;
    pointer-events: none;
}

.menu-set {
    align-self: flex-start;
    flex: none;
    width: 99px;
    height: 19px;
    margin-top: 3px;
}

.sep {
    flex: none;
    width: 10px;
    height: 26px;
}

.stack {
    flex: none;
    width: 18px;
    height: 26px;
}

.down {
    flex: none;
    width: 12px;
    height: 12px;
}

.icon {
    flex: none;
    width: 26px;
    height: 26px;
    padding: 1px;
    border-radius: 3px;
}

.icon.on {
    background-color: #958b9c;
    border: 1px solid #302a32;
    padding: 0;
}

.masks {
    display: flex;
    margin: 0 3px 0 4px;
}

.flat {
    height: 20px;
    padding-left: 3px;
    border: 1px solid #7e7482;
    border-top-color: #5c545f;
    border-left-color: #5c545f;
}

.objects {
    width: 93px;
}

.dark {
    flex: none;
    width: 68px;
    height: 20px;
    padding-left: 4px;
    border: 1px solid #847a88;
    background-color: #302c32;
}

.coords {
    display: flex;
    flex: 1;
    align-items: center;
    padding-left: 3px;
}

.coords .dark {
    flex: 1;
    width: 38px;
    min-width: 38px;
    height: 25px;
    margin: 0 1px;
    border: 0;
}

.coords .icon:last-child {
    margin-right: 2px;
}

/* Shelf */
.shelf {
    display: flex;
    flex: none;
    height: 72px;
    border-top: 1px solid #847a88;
    border-bottom: 1px solid #38323a;
}

.shelf-side {
    display: flex;
    flex: none;
    flex-direction: column;
    width: 22px;
    margin: 2px 2px 3px 0;
    border: 1px solid #38323a;
    border-right-color: #a89cac;
    border-bottom-color: #a89cac;
}

.swatch {
    flex: 1;
    border-bottom: 1px solid #e8daf0;
}

.swatch::after {
    content: "";
    display: block;
    width: 12px;
    height: 9px;
    margin: 30px auto 0;
    background-color: #dcc8e4;
}

.side-arrow {
    height: 17px;
    padding-left: 4px;
}

.shelf-main {
    display: flex;
    flex: 1;
    flex-direction: column;
    padding: 4px 3px 2px 0;
}

.tabs {
    display: flex;
    align-items: flex-end;
    height: 20px;
    padding-left: 1px;
}

.tabs button {
    height: 17px;
    padding: 0 10px;
    border: 1px solid #38323a;
    border-bottom: 0;
    border-left-color: #8c8290;
    background-color: #665e69;
}

.tabs .current {
    height: 20px;
    background-color: #b4a6bc;
    border-color: #c8bcd0;
}

.trash {
    width: 16px;
    height: 18px;
    margin: 0 0 3px auto;
}

.shelf-items {
    display: flex;
    flex: 1;
    align-items: center;
    gap: 5px;
    padding-left: 5px;
    border: 1px solid #38323a;
    outline: 1px solid #a89cac;
    outline-offset: -3px;
}

.shelf-items button {
    width: 30px;
    height: 30px;
}

/* Workspace */
.workspace {
    display: flex;
    flex: 1;
    min-height: 0;
    padding-top: 2px;
    border-bottom: 1px solid #38323a;
}

.toolbox {
    flex: none;
    width: 46px;
    padding: 2px 4px 0 3px;
}

.grip-h,
.dots {
    height: 8px;
    background-image: radial-gradient(circle, #a89cac 1px, transparent 1px);
    background-size: 5px 4px;
}

.tools {
    display: flex;
    flex-direction: column;
    align-items: center;
    gap: 2px;
    padding-top: 1px;
    border: 1px solid #38323a;
    border-right-color: #a89cac;
    border-bottom-color: #a89cac;
}

.tools button {
    width: 35px;
    height: 35px;
    padding: 1px;
    border: 1px solid #a89cac;
    border-radius: 2px;
    outline: 1px solid #4c444e;
}

.tools .current {
    background-color: #f4eafa;
}

.tools .layout {
    margin: 11px 0 4px;
}

.logo {
    display: block;
    width: 31px;
    height: 31px;
    margin: 2px 4px;
    border: 1px solid #201820;
    border-radius: 3px;
    background-color: #383038;
}

.viewport {
    display: flex;
    flex: 745;
    flex-direction: column;
    min-width: 0;
    margin-bottom: 2px;
    border: 1px solid #ecdcf4;
}

.panel-menu {
    display: flex;
    flex: none;
    gap: 15px;
    height: 18px;
    padding: 2px 0 0 7px;
}

.panel-bar {
    display: flex;
    flex: none;
    align-items: center;
    height: 21px;
}

.panel-bar .sep {
    height: 16px;
}

.panel-bar button {
    width: 20px;
    height: 20px;
    padding: 1px;
    border-radius: 2px;
}

.panel-bar .on {
    background-color: #302a32;
}

.scene {
    position: relative;
    flex: 1;
    min-height: 0;
    overflow: hidden;
    background-color: #080808;
}

.scene svg {
    width: 100%;
    height: 100%;
}

.axis {
    font-size: 12px;
    font-weight: bold;
}

.hud {
    position: absolute;
    top: -4px;
    left: 15px;
    border-collapse: collapse;
    font-family: "Liberation Sans", Arial, sans-serif;
    font-size: 11px;
    font-weight: bold;
}

.hud th,
.hud td {
    width: 65px;
    height: 20px;
    padding: 0;
    text-align: right;
}

.hud th {
    width: 50px;
    color: #08683c;
    text-align: left;
}

.camera-name {
    position: absolute;
    bottom: 7px;
    left: 356px;
    color: #08582c;
    font-family: "Liberation Sans", Arial, sans-serif;
}

.splitter {
    flex: none;
    width: 8px;
    background: radial-gradient(circle, #a89cac 1px, transparent 1px) center / 4px 4px repeat-y;
}

/* Tool settings */
.tool-settings {
    display: flex;
    flex: 461;
    flex-direction: column;
    min-width: 0;
}

.dock-title {
    display: flex;
    flex: none;
    align-items: center;
    gap: 3px;
    height: 16px;
}

.dock-title h2 {
    margin: 0 6px;
    font-size: 10px;
    font-weight: normal;
}

.dots {
    flex: 1;
}

.dock-title button {
    width: 12px;
    height: 12px;
    background-color: #282028;
}

.tool-head {
    display: flex;
    flex: none;
    align-items: center;
    gap: 6px;
    height: 30px;
}

.tool-head span {
    flex: 1;
}

.push {
    height: 23px;
    border: 1px solid #38323a;
    border-radius: 2px;
    background-color: #b4a6bc;
}

.reset-tool {
    width: 108px;
}

.tool-help {
    width: 90px;
}

.settings-frame {
    display: flex;
    flex: 1;
    gap: 2px;
    min-height: 0;
    margin: 1px 2px 5px 0;
    padding: 4px 2px 0 5px;
    border: 1px solid #302a32;
    outline: 1px solid #8c8290;
    outline-offset: -2px;
}

.settings {
    flex: 1;
    overflow: hidden;
}

.settings h3 {
    display: flex;
    align-items: center;
    height: 20px;
    margin: 0;
    border: 1px solid #a89cac;
    border-right-color: #302a32;
    border-bottom: 2px solid #302a32;
    background-color: #897e90;
    font-size: 11px;
}

.settings h3::before {
    content: "";
    margin: 0 14px 0 6px;
    border: 5px solid transparent;
    border-top-color: #f6ecfc;
    border-bottom: 0;
}

.group {
    padding: 2px 0 1px;
    border: 1px solid #a89cac;
    border-top: 0;
    border-bottom: 0;
}

.row {
    display: flex;
    align-items: center;
    height: 20px;
}

.tight {
    height: 15px;
}

.tall {
    height: 22px;
}

.taller {
    height: 26px;
}

.name {
    flex: none;
    width: 128px;
    margin-right: 8px;
    text-align: right;
}

.dim {
    color: #c8bccc;
}

.opt {
    display: flex;
    align-items: center;
    min-width: 85px;
    white-space: nowrap;
}

.nested {
    padding-left: 18px;
}

input[type="radio"] {
    appearance: none;
    width: 11px;
    height: 11px;
    margin-right: 6px;
    border: 2px solid #302a32;
    border-radius: 50%;
    background-color: #302a32;
}

input[type="radio"]:checked {
    background-color: #fff;
}

input[type="checkbox"] {
    appearance: none;
    width: 13px;
    height: 13px;
    margin-right: 5px;
    background-color: #302a32;
}

input[type="checkbox"]:checked::before {
    content: "";
    display: block;
    width: 5px;
    height: 9px;
    margin: 1px 0 0 4px;
    border: solid #fff;
    border-width: 0 2px 2px 0;
    rotate: 40deg;
}

.number {
    width: 61px;
    color: #a094a6;
}

.reset {
    width: 48px;
    margin-left: 125px;
}

.falloff {
    width: 66px;
    height: 20px;
    background-color: #7e7482;
}

input[type="range"] {
    appearance: none;
    flex: 1;
    height: 18px;
    margin: 0 8px 0 3px;
}

input[type="range"]::-webkit-slider-runnable-track {
    height: 4px;
    border: 1px solid #38323a;
    border-radius: 2px;
}

input[type="range"]::-webkit-slider-thumb {
    appearance: none;
    width: 13px;
    height: 14px;
    margin-top: -6px;
    border: 1px solid #302a32;
    border-radius: 2px 2px 7px 7px;
    background-color: #7e7482;
}

.curve-row {
    height: 90px;
}

.curve {
    width: 176px;
    height: 90px;
}

.scrollbar {
    display: flex;
    flex: none;
    flex-direction: column;
    gap: 1px;
    width: 16px;
    margin: -2px 0 1px;
}

.scrollbar button {
    display: flex;
    align-items: center;
    justify-content: center;
    height: 15px;
    border: 1px solid #38323a;
    border-radius: 2px;
    background-color: #b4a6bc;
}

.scrollbar button::before {
    content: "";
    border: 4px solid transparent;
}

.scrollbar .up::before {
    margin-top: -4px;
    border-bottom-color: #fff;
}

.scrollbar .dn::before {
    margin-top: 4px;
    border-top-color: #fff;
}

.thumb {
    display: flex;
    align-items: center;
    justify-content: center;
    flex: 175;
    border: 1px solid #38323a;
    background-color: #b4a6bc;
}

.thumb::before {
    content: "";
    width: 12px;
    height: 20px;
    background: radial-gradient(circle, #38323a 1px, transparent 1px) 0 0 / 4px 4px;
}

.track {
    flex: 195;
    background: repeating-conic-gradient(#302a32 0 25%, #605864 0 50%) 0 0 / 2px 2px;
}

.side-tabs {
    display: flex;
    flex: none;
    flex-direction: column;
    width: 20px;
    padding-left: 1px;
}

.side-tabs button {
    height: 150px;
    border: 1px solid #302a32;
    background-color: #665e69;
    line-height: 16px;
    writing-mode: vertical-rl;
}

.side-tabs .current {
    height: 82px;
    border-color: #c8bcd0;
    background-color: #b4a6bc;
}

/* Time slider */
.time-row {
    display: flex;
    flex: none;
    align-items: center;
    height: 34px;
    border-top: 1px solid #847a88;
    border-bottom: 1px solid #38323a;
}

.timeline {
    display: flex;
    flex: 1;
    height: 30px;
    margin: 0 3px 0 0;
    padding: 0 0 0 5px;
    border-top: 1px solid #38323a;
    border-left: 1px solid #38323a;
    background-color: #d6c4e6;
    color: #181018;
    line-height: 11px;
    list-style: none;
}

.timeline li {
    position: relative;
    flex: 2;
    text-indent: 7px;
}

.timeline li::before {
    content: "";
    position: absolute;
    left: 0;
    bottom: 1px;
    width: 2px;
    height: 15px;
    background-color: #181018;
}

.timeline .now {
    flex: 1;
    padding-top: 15px;
    background-color: #a498ac;
    color: #fff;
}

.timeline .now::before {
    display: none;
}

.timeline .last {
    flex: 1;
}

.playback {
    display: flex;
    flex: none;
    width: 225px;
    margin-right: 4px;
    padding-left: 4px;
}

.playback button {
    flex: 1;
}

.playback svg {
    width: 22px;
    height: 18px;
    margin: auto;
    fill: #f6ecfc;
    stroke: #38323a;
    stroke-width: .5;
}

/* Range slider */
.range-row {
    display: flex;
    flex: none;
    align-items: center;
    gap: 4px;
    height: 30px;
    padding-right: 3px;
    border-top: 1px solid #847a88;
    border-bottom: 1px solid #38323a;
}

.range-row .grip {
    margin-right: -2px;
}

.range {
    display: flex;
    flex: 1;
    align-items: flex-end;
    justify-content: space-between;
    height: 22px;
    padding: 2px 2px 0 4px;
    background-color: #242026;
    border-bottom: 1px solid #a89cac;
}

.range-bar {
    display: flex;
    align-items: center;
    gap: 6px;
    width: 51%;
    height: 18px;
    padding: 0 3px 0 5px;
    background-color: #b8a8c2;
    border-top: 1px solid #d0c0d8;
}

.range-bar .end {
    margin-left: auto;
    margin-right: 2px;
}

.stop {
    width: 9px;
    height: 11px;
    border: solid #302a32;
    border-width: 0 1px 1px 0;
}

.range-more {
    width: 14px;
    height: 14px;
    background-color: #b8a8c2;
}

.range-more::before {
    content: "";
    display: block;
    width: 0;
    margin: auto;
    border: 4px solid transparent;
    border-right: 5px solid #fff;
    border-left: 0;
}

.layer {
    width: 103px;
}

.small {
    flex: none;
    width: 18px;
    height: 16px;
}

/* Command line */
.command-row {
    display: flex;
    flex: none;
    align-items: center;
    height: 31px;
    padding-right: 3px;
    border-top: 1px solid #847a88;
    border-bottom: 1px solid #38323a;
}

.command-row label {
    width: 44px;
    padding-left: 10px;
}

.command-row .dark {
    flex: 99;
    height: 25px;
}

.result {
    flex: 100;
    height: 25px;
    margin: 0 0 0 6px;
    background-color: #000;
}

/* Help line */
.help-line {
    display: flex;
    flex: none;
    height: 24px;
    padding-top: 2px;
}

.help-line .grip {
    margin-right: 1px;
}

.help-text {
    display: flex;
    flex: 1;
    align-items: center;
    gap: 18px;
    padding: 2px 3px 0 12px;
    border-top: 1px solid #38323a;
    border-left: 1px solid #38323a;
    font-size: 10px;
}

.resize {
    align-self: flex-end;
    width: 14px;
    height: 14px;
    margin-left: auto;
}
```
